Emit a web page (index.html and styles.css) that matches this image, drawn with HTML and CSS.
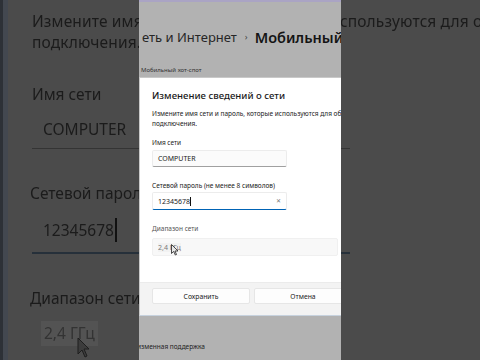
FILE: index.html
```html
<!DOCTYPE html>
<html lang="ru">
<head>
<meta charset="utf-8">
<link rel="stylesheet" href="styles.css">
</head>
<body>
<div class="edge"><div class="edge-dark"></div><div class="edge-light"></div></div>
<div class="backdrop">
  <p class="bd-desc">Измените имя сети и пароль, которые используются для общего<br>подключения.</p>
  <div class="bd-label">Имя сети</div>
  <div class="bd-field">COMPUTER</div>
  <div class="bd-label bd-label-2">Сетевой пароль (не менее 8 символов)</div>
  <div class="bd-field bd-field-active">12345678<span class="bd-caret"></span></div>
  <div class="bd-label bd-label-2">Диапазон сети</div>
  <div class="bd-select"><span class="bd-select-text">2,4 ГГц</span></div>
  <svg class="bd-pointer" width="14" height="22" viewBox="0 0 14 22"><path d="M1 1 L1 17 L5 13 L8 20 L10 19 L7 12 L12 12 Z" fill="#3c3c3c" stroke="#1e1e1e" stroke-width="1"/></svg>
</div>

<div class="phone">
  <div class="phone-top"></div>
  <div class="crumbs"><span class="crumb">еть и Интернет</span><span class="crumb-sep">›</span><span class="crumb-cur">Мобильный хот-спот</span></div>
  <div class="section-title">Мобильный хот-спот</div>
  <div class="below-text">изменная поддержка</div>

  <div class="dialog">
    <div class="dialog-body">
      <div class="dialog-title">Изменение сведений о сети</div>
      <p class="dialog-desc">Измените имя сети и пароль, которые используются для общего<br>подключения.</p>
      <div class="field">
        <div class="field-label">Имя сети</div>
        <div class="input">COMPUTER</div>
      </div>
      <div class="field">
        <div class="field-label">Сетевой пароль (не менее 8 символов)</div>
        <div class="input input-active"><span class="input-text">12345678<span class="caret"></span></span><span class="clear">✕</span></div>
      </div>
      <div class="field">
        <div class="field-label field-label-dim">Диапазон сети</div>
        <div class="select"><span class="select-text">2,4 ГГц</span></div>
      </div>
    </div>
    <div class="dialog-footer">
      <div class="btn">Сохранить</div>
      <div class="btn">Отмена</div>
    </div>
    <svg class="pointer" width="8" height="12" viewBox="0 0 8 12"><path d="M0.5 0.5 L0.5 9.5 L2.7 7.4 L4.3 11 L5.5 10.5 L4 7 L7 7 Z" fill="#e8e8e8" stroke="#222" stroke-width="0.8"/></svg>
  </div>
</div>
</body>
</html>
```

FILE: styles.css
```css
* { box-sizing: border-box; }
html, body { margin: 0; padding: 0; }
body {
  width: 480px;
  height: 360px;
  overflow: hidden;
  background: #4b4b4b;
  font-family: "Noto Sans", "Open Sans", sans-serif;
  position: relative;
  display: flex;
}
.edge { width: 8px; flex: none; display: flex; }
.edge-dark { width: 3px; background: #2d3137; }
.edge-light { width: 5px; background: #434850; }

.backdrop {
  flex: 1;
  position: relative;
  padding: 11px 0 0 24px;
  color: #1b1b1b;
  white-space: nowrap;
  overflow: hidden;
  filter: blur(0.5px);
  font-size: 15.5px;
  line-height: 21px;
}
.bd-desc { margin: 0; letter-spacing: 0.15px; }
.bd-label { margin-top: 31px; }
.bd-label-2 { margin-top: 34px; margin-left: -2px; }
.bd-field {
  margin-top: 14px;
  padding: 0 0 8px 11px;
  width: 318px;
  border-bottom: 1px solid #343434;
}
.bd-field-active { padding-bottom: 10px; border-bottom: 2px solid #26303a; }
.bd-caret { display: inline-block; width: 2px; height: 24px; background: #111; vertical-align: -6px; margin-left: 1px; }
.bd-select { margin-top: 12px; padding-left: 9px; }
.bd-select-text { display: inline-block; padding: 2px 3px; background: #535353; color: #333; }
.bd-pointer { position: absolute; left: 69px; top: 337px; }

.phone {
  position: absolute;
  left: 139px;
  top: 0;
  width: 202px;
  height: 360px;
  background: #b2b2b2;
  overflow: hidden;
  color: #1c1c1c;
}
.phone-top { height: 2px; background: #aaa4c4; }
.crumbs {
  margin-top: 26px;
  padding-left: 3px;
  white-space: nowrap;
  font-size: 13px;
  line-height: 18px;
  display: flex;
  align-items: center;
}
.crumb { color: #262626; }
.crumb-sep { font-size: 9px; color: #444; margin: 0 7px 0 8px; }
.crumb-cur { font-weight: 600; font-size: 14.5px; color: #141414; }
.section-title {
  margin-top: 20px;
  padding-left: 2px;
  font-size: 6px;
  line-height: 8px;
  color: #333;
  white-space: nowrap;
}
.below-text {
  position: absolute;
  left: -2px;
  top: 342px;
  font-size: 6.5px;
  color: #222;
  white-space: nowrap;
}

.dialog {
  position: absolute;
  left: 0;
  top: 77px;
  width: 300px;
  height: 239px;
  background: #fff;
  border: 1px solid #c9c9c9;
  border-bottom: 1px solid #c7d2de;
  display: flex;
  flex-direction: column;
  color: #1b1b1b;
}
.dialog-body { flex: 1; padding: 10px 12px 0 12px; }
.dialog-title { font-size: 9.6px; line-height: 16px; font-weight: 500; color: #1a1a1a; white-space: nowrap; }
.dialog-desc {
  margin: 5px 0 0 0;
  font-size: 6.5px;
  line-height: 9.5px;
  color: #222;
  white-space: nowrap;
}
.field { margin-top: 10px; }
.field + .field { margin-top: 14px; }
.field-label { font-size: 6.5px; line-height: 10px; color: #222; white-space: nowrap; }
.field-label-dim { color: #555; }
.input {
  margin-top: 2px;
  width: 135px;
  height: 17px;
  padding: 0 5px;
  background: #fbfbfb;
  border: 1px solid #ececec;
  border-bottom-color: #a0a0a0;
  border-radius: 2px;
  font-size: 7px;
  display: flex;
  align-items: center;
  justify-content: space-between;
}
.input-active { margin-top: 1px; height: 18px; background: #fff; border-bottom: 1.5px solid #0063b5; }
.caret { display: inline-block; width: 0.8px; height: 9px; background: #111; vertical-align: -2px; }
.clear { font-size: 5.5px; color: #777; }
.select {
  margin-top: 4px;
  width: 186px;
  height: 18px;
  padding: 0 5px;
  background: #f8f8f8;
  border: 1px solid #f0f0f0;
  border-radius: 2px;
  font-size: 7px;
  display: flex;
  align-items: center;
  color: #7a7a7a;
}
.select-text { background: #f2f2f2; }
.pointer { position: absolute; left: 31px; top: 166px; }
.dialog-footer {
  height: 33px;
  background: #f3f3f3;
  border-top: 1px solid #ebebeb;
  padding: 5px 12px 0 12px;
  display: flex;
  gap: 4px;
}
.btn {
  width: 98px;
  height: 16px;
  background: #fdfdfd;
  border: 1px solid #e6e6e6;
  border-radius: 2px;
  font-size: 6.8px;
  display: flex;
  align-items: center;
  justify-content: center;
  color: #1b1b1b;
}
```
